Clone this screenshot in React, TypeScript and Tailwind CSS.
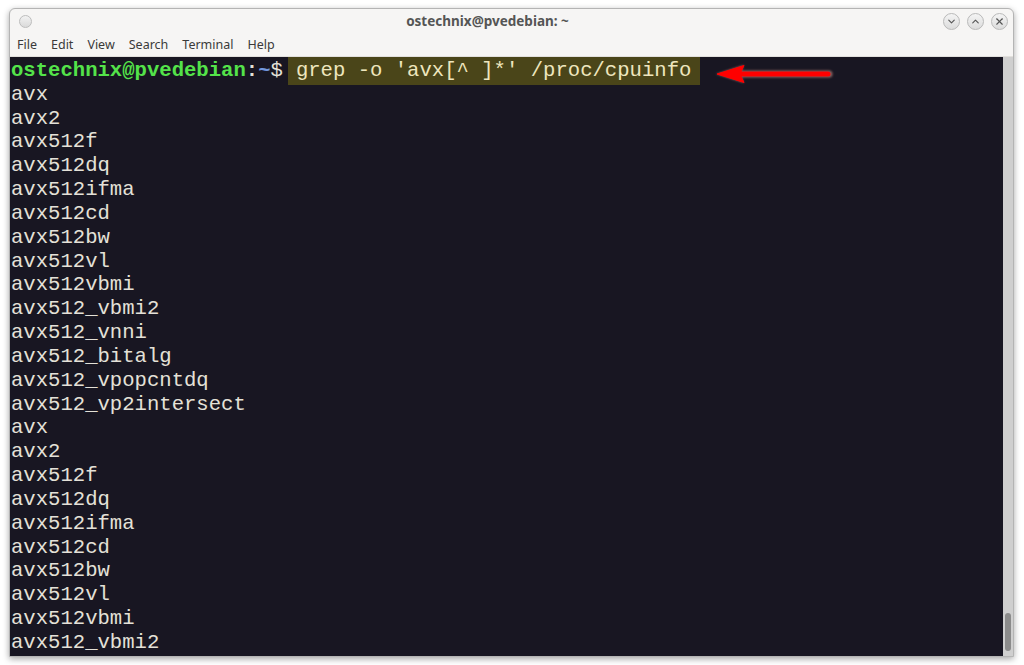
import { ChevronDown, ChevronUp, X } from 'lucide-react';

const output = [
  'avx',
  'avx2',
  'avx512f',
  'avx512dq',
  'avx512ifma',
  'avx512cd',
  'avx512bw',
  'avx512vl',
  'avx512vbmi',
  'avx512_vbmi2',
  'avx512_vnni',
  'avx512_bitalg',
  'avx512_vpopcntdq',
  'avx512_vp2intersect',
  'avx',
  'avx2',
  'avx512f',
  'avx512dq',
  'avx512ifma',
  'avx512cd',
  'avx512bw',
  'avx512vl',
  'avx512vbmi',
  'avx512_vbmi2',
];

const menu = ['File', 'Edit', 'View', 'Search', 'Terminal', 'Help'];

const WinButton = ({ children }: { children: React.ReactNode }) => (
  <div className="w-[17px] h-[17px] rounded-full border border-[#b9b9b9] bg-gradient-to-b from-[#f4f4f4] to-[#dcdcdc] flex items-center justify-center text-[#555]">
    {children}
  </div>
);

const App = () => {
  return (
    <div className="w-[1024px] h-[665px] bg-white pl-[9px] pt-[8px] overflow-hidden">
      <div className="relative w-[1005px] h-[649px] flex flex-col rounded-t-[6px] border border-[#b4b4b4] bg-[#f6f5f4] shadow-[0_2px_6px_rgba(0,0,0,0.35)]">
        {/* Title bar */}
        <div className="h-[25px] flex items-center px-[8px] font-['Noto_Sans',sans-serif]">
          <div className="w-[13px] h-[13px] rounded-full border border-[#bdbdbd] bg-gradient-to-b from-[#f2f2f2] to-[#dadada] ml-[1px]" />
          <div className="flex-1 text-center text-[13.5px] font-bold text-[#555]">ostechnix@pvedebian: ~</div>
          <div className="flex gap-[7px] mr-[-3px]">
            <WinButton><ChevronDown size={11} strokeWidth={2.5} /></WinButton>
            <WinButton><ChevronUp size={11} strokeWidth={2.5} /></WinButton>
            <WinButton><X size={11} strokeWidth={2.5} /></WinButton>
          </div>
        </div>

        {/* Menu bar */}
        <div className="h-[23px] flex items-center gap-[14px] pl-[7px] text-[12.5px] text-[#3a3a3a] font-['Noto_Sans',sans-serif] border-b border-[#e2e0dd]">
          {menu.map((m) => (
            <span key={m}>{m}</span>
          ))}
        </div>

        {/* Terminal */}
        <div className="flex-1 flex min-h-0">
          <div className="flex-1 bg-[#181622] pl-[1px] pt-[2px] font-['Liberation_Mono',monospace] text-[20.6px] leading-[23.83px] text-[#e4e1d8] whitespace-pre overflow-hidden">
            <div>
              <span className="text-[#54e34a] font-bold">ostechnix@pvedebian</span>
              <span className="text-[#e4e1d8] font-bold">:</span>
              <span className="text-[#7297dc] font-bold">~</span>
              <span className="text-[#e4e1d8]">$</span>
              <span className="ml-[5px] pl-[8px] pr-[9px] py-[3px] bg-[#4a4519] text-[#eee6be]">grep -o 'avx[^ ]*' /proc/cpuinfo</span>
            </div>
            {output.map((line, i) => (
              <div key={i}>{line}</div>
            ))}
          </div>
          <div className="w-[10px] bg-[#cfcfcf] flex flex-col justify-end pb-[5px] items-center">
            <div className="w-[6px] h-[38px] rounded-full bg-[#8b8b8b]" />
          </div>
        </div>

        {/* Annotation arrow */}
        <svg className="absolute left-[696px] top-[53px]" width="130" height="26" viewBox="0 0 130 26">
          <defs>
            <filter id="glow" x="-20%" y="-50%" width="140%" height="200%">
              <feGaussianBlur stdDeviation="1.2" />
            </filter>
          </defs>
          <g filter="url(#glow)" opacity="0.5">
            <line x1="34" y1="12" x2="123" y2="12" stroke="#ffb0a0" strokeWidth="7" strokeLinecap="round" />
            <polygon points="10,12 38,3 34,12 38,21" fill="#ffb0a0" />
          </g>
          <line x1="34" y1="12" x2="122" y2="12" stroke="#f00" strokeWidth="5" strokeLinecap="round" />
          <polygon points="11,12 38,3.5 34,12 38,20.5" fill="#f00" stroke="#f00" strokeWidth="1" strokeLinejoin="round" />
        </svg>
      </div>
    </div>
  );
};

export default App;
